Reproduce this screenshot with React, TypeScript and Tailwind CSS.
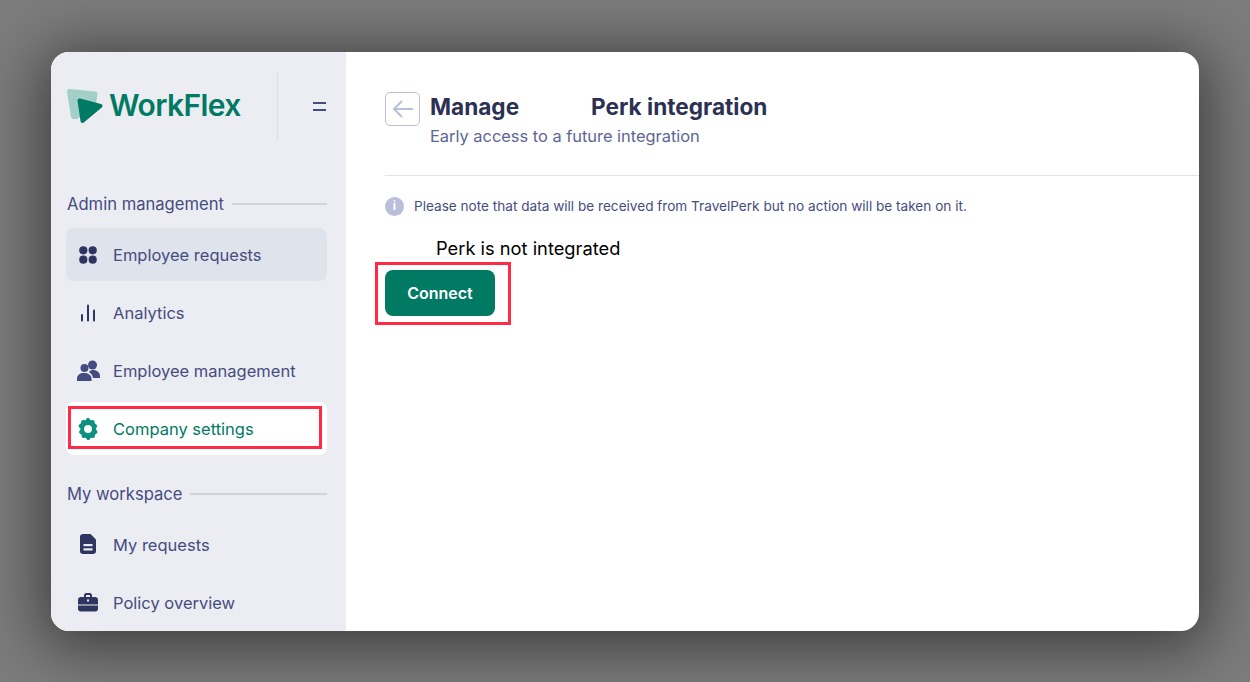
import type { ReactNode } from "react";

const font = { fontFamily: "Inter, sans-serif" };

function GridIcon() {
  return (
    <svg width="18" height="18" viewBox="0 0 18 18" fill="#2E3560">
      <circle cx="4.300" cy="4.300" r="4.100" />
      <circle cx="13.700" cy="4.300" r="4.100" />
      <circle cx="4.300" cy="13.700" r="4.100" />
      <circle cx="13.700" cy="13.700" r="4.100" />
    </svg>
  );
}

function BarsIcon() {
  return (
    <svg width="16" height="18" viewBox="0 0 16 18" fill="#2E3560">
      <rect x="1" y="10" width="2" height="7.500" rx="1" />
      <rect x="7" y="0.500" width="2" height="17" rx="1" />
      <rect x="13" y="5.500" width="2" height="12" rx="1" />
    </svg>
  );
}

function PeopleIcon() {
  return (
    <svg width="23" height="22" viewBox="0 0 23 22" fill="#454C7F">
      <circle cx="7.500" cy="8" r="4" />
      <circle cx="15.500" cy="5" r="4.500" />
      <path d="M0 21v-2.500C0 15 3 13 7 13s7.500 2 7.500 5.500V21z" />
      <path d="M12 12c1-1.500 2.500-2 4-2 4 0 7 2.500 7 6v2h-7c-.3-2.500-1.800-4.600-4-6z" />
    </svg>
  );
}

function GearIcon() {
  return (
    <svg width="22" height="22" viewBox="0 0 24 24" fill="#0D9080">
      <path
        fillRule="evenodd"
        d="M9.200 2.400 10.400.8a2 2 0 0 1 3.200 0l1.200 1.600 2-.3a2 2 0 0 1 2.300 1.700l.3 2 1.700 1.200a2 2 0 0 1 .5 2.700L20.800 11.500v1l1.100 1.800a2 2 0 0 1-.5 2.700l-1.700 1.200-.3 2a2 2 0 0 1-2.300 1.700l-2-.3-1.200 1.600a2 2 0 0 1-3.200 0l-1.200-1.600-2 .3a2 2 0 0 1-2.300-1.700l-.3-2L3.200 17a2 2 0 0 1-.5-2.700l1.100-1.800v-1L2.100 9.700a2 2 0 0 1 .5-2.700l1.700-1.200.3-2a2 2 0 0 1 2.300-1.700zM12 7.700a4.300 4.300 0 1 0 0 8.600 4.300 4.300 0 0 0 0-8.600z"
      />
    </svg>
  );
}

function FileIcon() {
  return (
    <svg width="16" height="20" viewBox="0 0 16 20">
      <path d="M3 0h7.500L16 5.500V17a3 3 0 0 1-3 3H3a3 3 0 0 1-3-3V3a3 3 0 0 1 3-3z" fill="#2E3560" />
      <rect x="3.500" y="10" width="9" height="2.200" fill="#ECEDF3" />
      <rect x="3.500" y="14.300" width="9" height="2.200" fill="#ECEDF3" />
    </svg>
  );
}

function CaseIcon() {
  return (
    <svg width="20" height="20" viewBox="0 0 20 20" fill="#2E3560">
      <path
        fillRule="evenodd"
        d="M6 5V3.500A2.500 2.500 0 0 1 8.500 1h3A2.500 2.500 0 0 1 14 3.500V5h3a3 3 0 0 1 3 3v4.500H0V8a3 3 0 0 1 3-3zm2 0h4V3.500a.5.5 0 0 0-.5-.5h-3a.5.5 0 0 0-.5.5z"
      />
      <path d="M0 13.500h20v3a3 3 0 0 1-3 3H3a3 3 0 0 1-3-3z" />
      <rect x="9" y="7.500" width="2" height="2" fill="#ECEDF3" />
    </svg>
  );
}

function NavItem({ icon, label, active, current }: { icon: ReactNode; label: string; active?: boolean; current?: boolean }) {
  return (
    <div
      className={`relative flex h-[53px] items-center rounded-lg ${active ? "bg-[#DFE3EC]" : ""} ${current ? "bg-white text-[#007A63]" : "text-[#454C7F]"}`}
    >
      <div className="mr-[3px] flex w-[44px] shrink-0 justify-center">{icon}</div>
      <span className="pt-[2px] text-[16.5px] leading-none">{label}</span>
      {current ? (
        <div className="absolute left-[2px] top-[4px] h-[43px] w-[254px] border-[3px] border-[#FF2A45]" />
      ) : null}
    </div>
  );
}

function SectionLabel({ label }: { label: string }) {
  return (
    <div className="flex items-center gap-[8px] pl-px">
      <span className="text-[16.6px] leading-none text-[#454C7F]">{label}</span>
      <div className="h-[2px] flex-1 bg-[#D2D4DC]" />
    </div>
  );
}

export default function App() {
  return (
    <div className="flex h-[682px] w-full items-center justify-center bg-[#7C7C7C]" style={font}>
      <div className="flex h-[579px] w-[1148px] overflow-hidden rounded-[18px] bg-white shadow-[0_8px_60px_10px_rgba(0,0,0,0.5)]">
        <aside className="flex w-[295px] shrink-0 flex-col bg-[#ECEDF3] pl-[15px] pr-[19px]">
          <div className="mt-[20px] flex h-[68px] items-center">
            <svg width="38" height="38" viewBox="0 0 38 38" className="-ml-px shrink-0">
              <path d="M4.500 4.500 30 7 28 20 11 29.500H8.500z" fill="#A2CFC8" stroke="#A2CFC8" strokeWidth="5" strokeLinejoin="round" />
              <path d="M14.500 13.500 35.500 19 17.500 34z" fill="#007A63" stroke="#007A63" strokeWidth="4" strokeLinejoin="round" />
            </svg>
            <span className="ml-[6px] text-[30px] font-semibold tracking-[-0.6px] text-[#007A63]">WorkFlex</span>
            <div className="ml-auto flex items-center">
              <div className="h-[68px] w-px bg-[#DDDFE7]" />
              <div className="ml-[35px] mr-px mt-px flex flex-col gap-[5px]">
                <div className="h-[2px] w-[13px] bg-[#454C7F]" />
                <div className="h-[2px] w-[13px] bg-[#454C7F]" />
              </div>
            </div>
          </div>
          <div className="mt-[56px]">
            <SectionLabel label="Admin management" />
          </div>
          <nav className="mt-[16px] flex flex-col gap-[5px]">
            <NavItem icon={<GridIcon />} label="Employee requests" active />
            <NavItem icon={<BarsIcon />} label="Analytics" />
            <NavItem icon={<PeopleIcon />} label="Employee management" />
            <NavItem icon={<GearIcon />} label="Company settings" current />
          </nav>
          <div className="mt-[31px]">
            <SectionLabel label="My workspace" />
          </div>
          <nav className="mt-[15px] flex flex-col gap-[5px]">
            <NavItem icon={<FileIcon />} label="My requests" />
            <NavItem icon={<CaseIcon />} label="Policy overview" />
          </nav>
        </aside>
        <main className="min-w-0 flex-1 pl-[39px] pt-[40px]">
          <div className="flex border-b border-[#E2E3E8] pb-[27px]">
            <div className="flex h-[34px] w-[35px] items-center justify-center rounded-[5px] border border-[#B9BFD9]">
              <svg width="22" height="18" viewBox="0 0 22 18" fill="none" stroke="#B9BFD9" strokeWidth="2">
                <path d="M21 9H2M10 1L2 9l8 8" />
              </svg>
            </div>
            <div className="ml-[10px]">
              <h1 className="flex text-[22.6px] font-bold leading-[30px] text-[#2B3153]">
                <span>Manage</span>
                <span className="ml-[72px]">Perk integration</span>
              </h1>
              <p className="mt-[2px] text-[16.4px] leading-[24px] text-[#5C6594]">Early access to a future integration</p>
            </div>
          </div>
          <div className="mt-[21px] flex h-[19px] items-center">
            <div className="flex h-[19px] w-[19px] items-center justify-center rounded-full bg-[#B9BFD9] text-[12px] font-bold leading-none text-white">i</div>
            <span className="ml-[10px] text-[13.6px] leading-[19px] text-[#454C7F]">Please note that data will be received from TravelPerk but no action will be taken on it.</span>
          </div>
          <p className="ml-[51px] mt-[20px] text-[18.3px] leading-[24px] text-black">Perk is not integrated</p>
          <div className="relative mt-[10px] h-[46px] w-[110px]">
            <button type="button" className="h-full w-full rounded-lg bg-[#007A63] text-[16px] font-semibold text-white">Connect</button>
            <div className="absolute -left-[10px] -top-[8px] h-[63px] w-[136px] border-[3px] border-[#FF2A45]" />
          </div>
        </main>
      </div>
    </div>
  );
}
